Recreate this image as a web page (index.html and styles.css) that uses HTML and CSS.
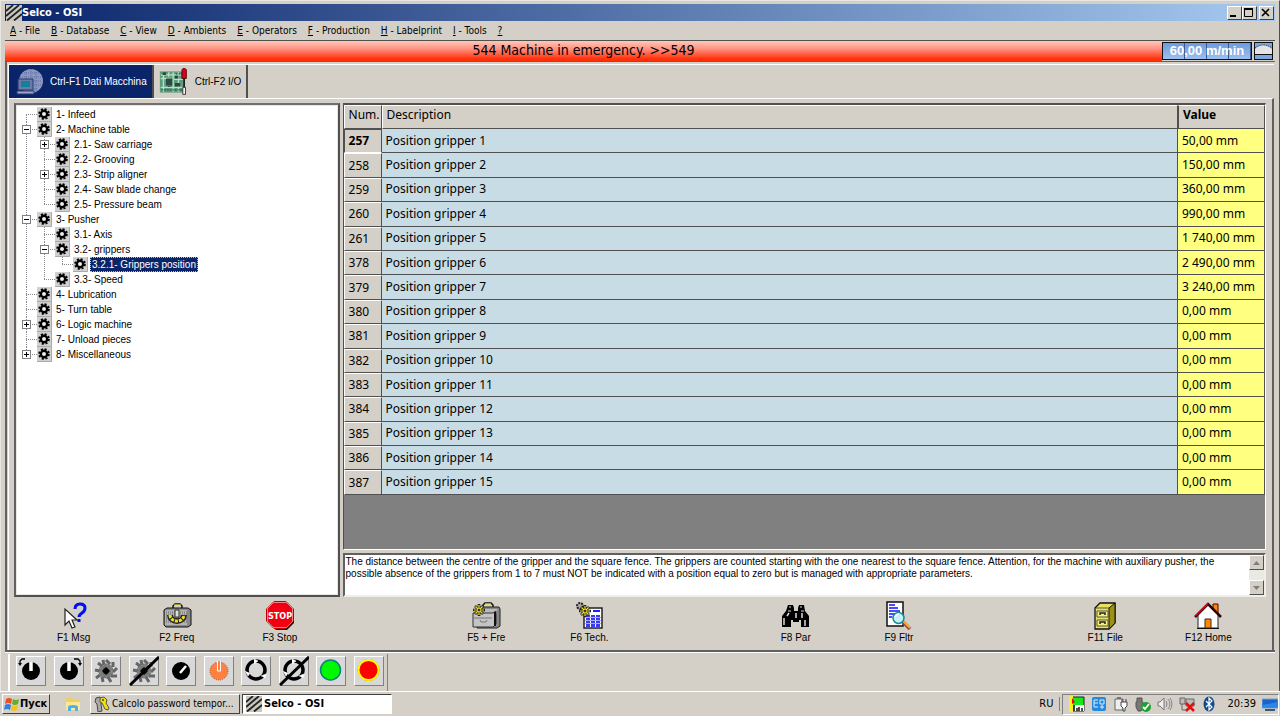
FILE: index.html
```html
<!DOCTYPE html>
<html lang="en">
<head>
    <meta charset="UTF-8">
    <meta name="viewport" content="width=device-width, initial-scale=1.0">
    <title>Selco - OSI</title>
    <link rel="stylesheet" href="styles.css">
</head>
<body>

    <!-- Shared icons -->
    <svg class="sprites" aria-hidden="true">
        <symbol id="logo" viewBox="0 0 16 16">
            <rect width="16" height="16" fill="#c8c8c0"/>
            <path d="M0 6L7 0M0 11L13 0M1 15.500L16 3M8 15.500L16 9" stroke="#222" stroke-width="1.800"/>
        </symbol>
        <symbol id="gear" viewBox="0 0 15 15">
            <rect width="15" height="15" fill="#d0d0d0"/>
            <path d="M0 14.500H14.500V0" fill="none" stroke="#aaa"/>
            <circle cx="7" cy="7" r="2" fill="#eee"/>
            <circle cx="7" cy="7" r="3.200" fill="none" stroke="#000" stroke-width="2.400"/>
            <circle cx="7" cy="7" r="4.900" fill="none" stroke="#000" stroke-width="1.800" stroke-dasharray="2.100 1.750"/>
        </symbol>
        <symbol id="saw" viewBox="0 0 30 30">
            <circle cx="15" cy="15" r="7.500" fill="#777"/>
            <path d="M15 4l4 4M22 6l0 5M26 12l-4 4M26 20l-6 0M20 26l-3-5M12 26l-1-5M5 22l4-3M4 14l5 1M7 7l4 3M12 4l1 5" stroke="#666" stroke-width="3"/>
            <circle cx="15" cy="15" r="6" fill="none" stroke="#999" stroke-width="1" stroke-dasharray="2 2"/>
            <circle cx="15" cy="15" r="3" fill="#000"/>
            <path d="M11 15h8M15 11v8" stroke="#000"/>
        </symbol>
        <symbol id="ring" viewBox="0 0 30 30">
            <circle cx="15" cy="14" r="9" fill="none" stroke="#000" stroke-width="3.500"/>
            <path d="M13 3l4 2-4 3M4 15l3 5 2-3M20 20l5-2-1 4" fill="#fff" stroke="#fff" stroke-width=".6"/>
        </symbol>
        <symbol id="spark" viewBox="0 0 12 12">
            <path d="M6 0v12M0 6h12M2 2l8 8M10 2l-8 8" stroke="#222" stroke-width="2.600"/>
            <path d="M6 1v10M1 6h10M2.500 2.500l7 7M9.500 2.500l-7 7" stroke="#f0e020" stroke-width="1.200"/>
            <circle cx="6" cy="6" r="1.300" fill="#333"/>
        </symbol>
    </svg>

    <main class="window">
        <header class="titlebar">
            <svg class="icon16"><use href="#logo"/></svg>
            <h1>Selco - OSI</h1>
            <button class="winbtn" aria-label="Minimize"><svg viewBox="0 0 11 10"><path d="M2 8h6" stroke="#000" stroke-width="2"/></svg></button>
            <button class="winbtn" aria-label="Maximize"><svg viewBox="0 0 11 10"><path d="M1.500 1v7.500h8V1M1 1.500h9" fill="none" stroke="#000"/><path d="M1 1h9" stroke="#000" stroke-width="2"/></svg></button>
            <button class="winbtn close" aria-label="Close"><svg viewBox="0 0 11 10"><path d="M2 1l7 7M9 1l-7 7" stroke="#000" stroke-width="1.600"/></svg></button>
        </header>

        <nav class="menu">
            <button><u>A</u> - File</button>
            <button><u>B</u> - Database</button>
            <button><u>C</u> - View</button>
            <button><u>D</u> - Ambients</button>
            <button><u>E</u> - Operators</button>
            <button><u>F</u> - Production</button>
            <button><u>H</u> - Labelprint</button>
            <button><u>I</u> - Tools</button>
            <button><u>?</u></button>
        </nav>

        <div class="alarm">
            <p class="alarm-text">544 Machine in emergency. &gt;&gt;549</p>
            <div class="speed">60,00 m/min</div>
            <svg class="gauge" viewBox="0 0 19 19"><rect x=".5" y=".5" width="18" height="17" fill="#7ba7e0" stroke="#111"/><path d="M1 12V7q8-8 17 0v5z" fill="#e4e4e4"/><path d="M1 6q8-6 17 0" fill="none" stroke="#223" stroke-dasharray="1 1"/><path d="M1 12.500h17" stroke="#111"/></svg>
        </div>

        <div class="client">
            <div class="tabs">
                <button class="tab active">
                    <svg viewBox="0 0 30 30"><circle cx="17" cy="14" r="12" fill="#8b98c0"/><path d="M8 6h18M6 10h22M6 14h22M8 18h20M10 22h14M12 3v23M17 2v24M22 3v22" stroke="#5d6da3" stroke-dasharray="1 1"/><path d="M4 12h15v11H4z" fill="#6b7ba8" stroke="#26396f"/><path d="M7 14h9v6H7z" fill="#168098"/><path d="M3 24h17v3H3z" fill="#9aa6c8" stroke="#26396f"/></svg>
                    Ctrl-F1 Dati Macchina
                </button>
                <button class="tab">
                    <svg viewBox="0 0 34 32"><path d="M1 4h28v24H1z" fill="#5c9c7c"/><path d="M2 8h26M2 12h12M17 13h10M2 22h25M5 5v22M11 5v5M16 5v22M22 5v22" stroke="#b7e2c4" stroke-width="1.500"/><path d="M8 12h7v8H8zM18 9h4v3h-4zM18 17h6v4h-6zM4 5h4v3H4z" fill="#2b4a40"/><path d="M3 25h24M10 21h4M19 7h8" stroke="#234" stroke-dasharray="2 1"/><path d="M26 2q2-3 5 0v10h-5z" fill="#e00010" stroke="#500"/><path d="M26 5v4" stroke="#70a"/><path d="M28.500 12v10" stroke="#222" stroke-width="2"/><path d="M27 22h3v8h-3z" fill="#fff" stroke="#222"/></svg>
                    Ctrl-F2 I/O
                </button>
            </div>

            <section class="panel">
                <div class="views">
                    <ul class="tree">
                        <li><div class="row"><span class="toggle"></span><svg><use href="#gear"/></svg><a href="#">1- Infeed</a></div></li>
                        <li>
                            <div class="row"><span class="toggle"><button aria-label="Collapse"></button></span><svg><use href="#gear"/></svg><a href="#">2- Machine table</a></div>
                            <ul>
                                <li><div class="row"><span class="toggle"><button class="plus" aria-label="Expand"></button></span><svg><use href="#gear"/></svg><a href="#">2.1- Saw carriage</a></div></li>
                                <li><div class="row"><span class="toggle"></span><svg><use href="#gear"/></svg><a href="#">2.2- Grooving</a></div></li>
                                <li><div class="row"><span class="toggle"><button class="plus" aria-label="Expand"></button></span><svg><use href="#gear"/></svg><a href="#">2.3- Strip aligner</a></div></li>
                                <li><div class="row"><span class="toggle"></span><svg><use href="#gear"/></svg><a href="#">2.4- Saw blade change</a></div></li>
                                <li><div class="row"><span class="toggle"></span><svg><use href="#gear"/></svg><a href="#">2.5- Pressure beam</a></div></li>
                            </ul>
                        </li>
                        <li>
                            <div class="row"><span class="toggle"><button aria-label="Collapse"></button></span><svg><use href="#gear"/></svg><a href="#">3- Pusher</a></div>
                            <ul>
                                <li><div class="row"><span class="toggle"></span><svg><use href="#gear"/></svg><a href="#">3.1- Axis</a></div></li>
                                <li>
                                    <div class="row"><span class="toggle"><button aria-label="Collapse"></button></span><svg><use href="#gear"/></svg><a href="#">3.2- grippers</a></div>
                                    <ul>
                                        <li><div class="row"><span class="toggle"></span><svg><use href="#gear"/></svg><a class="selected" href="#">3.2.1- Grippers position</a></div></li>
                                    </ul>
                                </li>
                                <li><div class="row"><span class="toggle"></span><svg><use href="#gear"/></svg><a href="#">3.3- Speed</a></div></li>
                            </ul>
                        </li>
                        <li><div class="row"><span class="toggle"></span><svg><use href="#gear"/></svg><a href="#">4- Lubrication</a></div></li>
                        <li><div class="row"><span class="toggle"></span><svg><use href="#gear"/></svg><a href="#">5- Turn table</a></div></li>
                        <li><div class="row"><span class="toggle"><button class="plus" aria-label="Expand"></button></span><svg><use href="#gear"/></svg><a href="#">6- Logic machine</a></div></li>
                        <li><div class="row"><span class="toggle"></span><svg><use href="#gear"/></svg><a href="#">7- Unload pieces</a></div></li>
                        <li><div class="row"><span class="toggle"><button class="plus" aria-label="Expand"></button></span><svg><use href="#gear"/></svg><a href="#">8- Miscellaneous</a></div></li>
                    </ul>

                    <div class="details">
                        <div class="grid-box">
                            <table class="params">
                                <thead>
                                    <tr><th class="num">Num.</th><th>Description</th><th class="value">Value</th></tr>
                                </thead>
                                <tbody>
                                    <tr class="current"><th>257</th><td>Position gripper 1</td><td>50,00 mm</td></tr>
                                    <tr><th>258</th><td>Position gripper 2</td><td>150,00 mm</td></tr>
                                    <tr><th>259</th><td>Position gripper 3</td><td>360,00 mm</td></tr>
                                    <tr><th>260</th><td>Position gripper 4</td><td>990,00 mm</td></tr>
                                    <tr><th>261</th><td>Position gripper 5</td><td>1 740,00 mm</td></tr>
                                    <tr><th>378</th><td>Position gripper 6</td><td>2 490,00 mm</td></tr>
                                    <tr><th>379</th><td>Position gripper 7</td><td>3 240,00 mm</td></tr>
                                    <tr><th>380</th><td>Position gripper 8</td><td>0,00 mm</td></tr>
                                    <tr><th>381</th><td>Position gripper 9</td><td>0,00 mm</td></tr>
                                    <tr><th>382</th><td>Position gripper 10</td><td>0,00 mm</td></tr>
                                    <tr><th>383</th><td>Position gripper 11</td><td>0,00 mm</td></tr>
                                    <tr><th>384</th><td>Position gripper 12</td><td>0,00 mm</td></tr>
                                    <tr><th>385</th><td>Position gripper 13</td><td>0,00 mm</td></tr>
                                    <tr><th>386</th><td>Position gripper 14</td><td>0,00 mm</td></tr>
                                    <tr><th>387</th><td>Position gripper 15</td><td>0,00 mm</td></tr>
                                </tbody>
                            </table>
                        </div>
                        <div class="help">
                            <textarea readonly aria-label="Parameter help">The distance between the centre of the gripper and the square fence. The grippers are counted starting with the one nearest to the square fence. Attention, for the machine with auxiliary pusher, the possible absence of the grippers from 1 to 7 must NOT be indicated with a position equal to zero but is managed with appropriate parameters.</textarea>
                            <div class="scroll">
                                <button aria-label="Scroll up"><svg viewBox="0 0 7 4"><path d="M0 4l3.500-4L7 4z" fill="#808080"/></svg></button>
                                <button aria-label="Scroll down"><svg viewBox="0 0 7 4"><path d="M0 0l3.500 4L7 0z" fill="#808080"/></svg></button>
                            </div>
                        </div>
                    </div>
                </div>

                <div class="fkeys">
                    <button>
                        <svg viewBox="0 0 30 30"><path d="M6 8v16l4-4 3 7 3-1-3-7h5z" fill="#fff" stroke="#222" stroke-width="1.200"/><path d="M16 8q0-5 5-5t5 4q0 3-3 5t-3 4M20 18v3" fill="none" stroke="#0010f0" stroke-width="3"/></svg>
                        F1 Msg
                    </button>
                    <button>
                        <svg viewBox="0 0 30 30"><path d="M11 8V5l2-2h5l2 2v3" fill="none" stroke="#111" stroke-width="1.500"/><path d="M12 4h7" stroke="#ee2"/><path d="M2 9l3-2h21l3 2v15l-3 2H4l-2-2z" fill="#888" stroke="#111"/><path d="M3 9h22v15H3z" fill="#b4b4b4"/><path d="M4 11h21M4 13h21M4 15h21M4 17h21M4 19h21M4 21h21" stroke="#666" stroke-dasharray="1 1"/><path d="M8 14a7 6 0 0 0 14 0" fill="none" stroke="#222" stroke-width="6"/><path d="M8 14a7 6 0 0 0 14 0" fill="none" stroke="#f0e020" stroke-width="3" stroke-dasharray="3 1"/><path d="M13 9h4v7h-4z" fill="#ddd" stroke="#333"/></svg>
                        F2 Freq
                    </button>
                    <button>
                        <svg viewBox="0 0 30 30"><path d="M10 3h12l7 7v12l-7 7H11l-7-7z" fill="#111"/><path d="M9 1h12l7 7v12l-7 7H9l-7-7V8z" fill="#f00010" stroke="#fff"/><path d="M9 .5h12l7.500 7.500v12l-7.500 7.500H9L1.500 20V8z" fill="none" stroke="#b00"/><text class="stop" x="15" y="18" text-anchor="middle">STOP</text></svg>
                        F3 Stop
                    </button>
                    <span></span>
                    <button>
                        <svg viewBox="0 0 30 30"><path d="M12 7V4l2-2h6l2 2v3" fill="none" stroke="#111" stroke-width="1.500"/><path d="M14 3h6" stroke="#ee2"/><path d="M6 8l2-2h20l1 2v17l-3 2H6z" fill="#888" stroke="#222"/><path d="M8 8h18v5H8z" fill="#bbb"/><path d="M2 12h20l3-2v13l-3 3H2z" fill="#c4c4c4" stroke="#333"/><path d="M3 17h18M9 19l1 2h5l1-2" fill="none" stroke="#777"/><path d="M24 11v14" stroke="#111" stroke-width="2"/><use href="#spark" x="2" y="3" width="12" height="12"/></svg>
                        F5 + Fre
                    </button>
                    <button>
                        <svg viewBox="0 0 30 30"><path d="M10 7h18v20H10z" fill="#fff" stroke="#222" stroke-width="1.500"/><path d="M19 10h7" stroke="#22f" stroke-width="2"/><path d="M12 14h4v12h-4zM17 14h4v12h-4zM22 14h4v12h-4z" fill="#3a3af0"/><path d="M11 16.500h16M11 19.500h16M11 22.500h16" stroke="#aaf"/><circle cx="6" cy="5" r="3" fill="#aaa" stroke="#222" stroke-width="2" stroke-dasharray="2 1"/><use href="#spark" x="5" y="4" width="12" height="12"/></svg>
                        F6 Tech.
                    </button>
                    <span></span>
                    <button>
                        <svg viewBox="0 0 30 30"><path d="M7 4h5l1 3v3h4V7l1-3h5l1 6 4 5v11h-8v-7h-2v2h-6v-2h-2v7H1V15l4-5z" fill="#000"/><path d="M8 6h2M19 6h2M7 10h3M20 10h3" stroke="#ddd"/><path d="M3 17v7M24 19v6M8 12l-2 3M21 12v5M15 12v5" stroke="#ddd" stroke-width="1.500"/></svg>
                        F8 Par
                    </button>
                    <button>
                        <svg viewBox="0 0 30 30"><path d="M3 1h16v24H3z" fill="#fff" stroke="#111" stroke-width="1.500"/><path d="M5 4h6M5 7h9M5 10h11M5 13h6M5 16h3" stroke="#11f" stroke-width="1.500"/><path d="M19 21l7 7" stroke="#a04040" stroke-width="3.500"/><path d="M19 20l7 7" stroke="#fa2" stroke-width="2"/><circle cx="14.500" cy="17" r="5.500" fill="#c4f0fa" stroke="#178a98" stroke-width="1.500"/><path d="M11 16q1-3 4-3" fill="none" stroke="#fff" stroke-width="1.500"/></svg>
                        F9 Fltr
                    </button>
                    <span></span>
                    <button>
                        <svg viewBox="0 0 30 30"><path d="M5 7l5-5h15v20l-6 6H5z" fill="#e8e060" stroke="#111" stroke-width="1.300"/><path d="M19 7l6-5v20l-6 6z" fill="#a09010" stroke="#111"/><path d="M6 7h13M7 10h11v6H7zM7 19h11v6H7z" fill="#f4f080" stroke="#554"/><path d="M10 14v-2h5v2M10 23v-2h5v2" fill="none" stroke="#222" stroke-width="1.500"/></svg>
                        F11 File
                    </button>
                    <button>
                        <svg viewBox="0 0 30 30"><path d="M20 3h5v9h-5z" fill="#f80" stroke="#500"/><path d="M5 14L15 4l10 10v13H5z" fill="#fff" stroke="#222"/><path d="M2 16L15 3l13 13" fill="none" stroke="#300" stroke-width="2.500"/><path d="M2.500 15L15 2.500" stroke="#e00020" stroke-width="1.500"/><path d="M12 18h6v9h-6z" fill="#f80" stroke="#422"/><path d="M4 27.500h22" stroke="#111"/></svg>
                        F12 Home
                    </button>
                </div>
            </section>
        </div>

        <div class="toolbar">
            <div class="tools">
                <button aria-label="Turn left"><svg viewBox="0 0 30 30"><circle cx="15" cy="15" r="9" fill="#000"/><path d="M15 6v9" stroke="#fff" stroke-width="3.500"/><path d="M4 8V5l2-2h3" fill="none" stroke="#000" stroke-width="1.300"/><path d="M2 7h4l-2 3z"/></svg></button>
                <button aria-label="Turn right"><svg viewBox="0 0 30 30"><circle cx="15" cy="15" r="9" fill="#000"/><path d="M15 6v9" stroke="#fff" stroke-width="3.500"/><path d="M26 8V5l-2-2h-4" fill="none" stroke="#000" stroke-width="1.300"/><path d="M24 7h4l-2 3z"/></svg></button>
                <button aria-label="Saw on"><svg viewBox="0 0 30 30"><use href="#saw"/></svg></button>
                <button aria-label="Saw off"><svg viewBox="0 0 30 30"><use href="#saw"/><path d="M1 29L30 1" stroke="#000" stroke-width="3"/></svg></button>
                <button aria-label="Selector"><svg viewBox="0 0 30 30"><circle cx="15" cy="15" r="9" fill="#000"/><path d="M14 17l6-7" stroke="#fff" stroke-width="2.500"/></svg></button>
                <button aria-label="Selector active"><svg viewBox="0 0 30 30"><circle cx="15" cy="15" r="9" fill="#ff8040" stroke="#b65018" stroke-dasharray="1 1"/><path d="M13.500 5v10h3V5" fill="#ff8040" stroke="#fff"/></svg></button>
                <button aria-label="Cycle on"><svg viewBox="0 0 30 30"><use href="#ring"/></svg></button>
                <button aria-label="Cycle off"><svg viewBox="0 0 30 30"><use href="#ring"/><path d="M1 29L30 1" stroke="#000" stroke-width="3"/></svg></button>
                <button aria-label="Start"><svg viewBox="0 0 30 30"><circle cx="14.500" cy="14" r="10" fill="#00f800" stroke="#088080" stroke-width="1.500"/></svg></button>
                <button aria-label="Stop"><svg viewBox="0 0 30 30"><circle cx="14.500" cy="14" r="10.500" fill="#f00" stroke="#777"/><circle cx="14.500" cy="14" r="10" fill="#f00" stroke="#ff0" stroke-width="1.800"/></svg></button>
            </div>
        </div>
    </main>

    <footer class="taskbar">
        <button class="start"><svg viewBox="0 0 16 16"><path d="M2 3q3-2 6 0L7 8Q4 6 1 8z" fill="#f05020"/><path d="M9 3q3 2 6 0l-1 5q-3 2-6 0z" fill="#60b030"/><path d="M1 9q3-2 6 0l-1 5q-3-2-6 0z" fill="#3080e0"/><path d="M8 9q3 2 6 0l-1 5q-3 2-6 0z" fill="#f8c020"/></svg>Пуск</button>
        <button class="quick" aria-label="Explorer"><svg viewBox="0 0 16 16"><path d="M1 3l2-2h4l1 2h7v11H1z" fill="#f2cf60"/><path d="M1 6h14v8H1z" fill="#fae99a"/><path d="M3 15v-4q0-2 5-2t5 2v4h-3v-3H6v3z" fill="#50b0e0"/></svg></button>
        <button class="task"><svg viewBox="0 0 16 16"><path d="M2 2l4-1 2 3-1 4 1 7-4 1-1-8-2-2z" fill="#aaa" stroke="#444"/><path d="M6 2l4-1 3 3-1 3 3 5-1 2-3-1-3-6-2-1z" fill="#f0e010" stroke="#554"/><circle cx="9" cy="4" r="1" fill="#443"/></svg>Calcolo password tempor...</button>
        <button class="task active"><svg><use href="#logo"/></svg>Selco - OSI</button>
        <span class="lang">RU</span>
        <div class="tray">
            <svg viewBox="0 0 16 16"><path d="M1 1h14v14H1z" fill="#18e818" stroke="#222"/><path d="M0 0h4v16H0z" fill="#f8f020"/><path d="M3 2l3 4-3 2z" fill="#e00"/><path d="M5 15V9h10v6z" fill="#fff"/><path d="M5 15V9M8 15v-3M10 15v-4M13 15v-3" stroke="#111" stroke-width="1.500"/></svg>
            <svg viewBox="0 0 16 16"><rect x="1" y="1" width="14" height="14" rx="2" fill="#2488e0"/><path d="M3 4h4M3 4v7h4M3 7h4M9 4h4v4H9zM9 11h4M11 9v4" fill="none" stroke="#d8efff"/></svg>
            <svg viewBox="0 0 16 16"><path d="M2 3h8v11H2z" fill="#eee" stroke="#666"/><path d="M4 1h4v2H4z" fill="#777"/><path d="M8 6h6v4l-2 2v3h-2v-3l-2-2zM9 3v3M13 3v3" fill="#fff" stroke="#444"/></svg>
            <svg viewBox="0 0 16 16"><path d="M2 2h5v4h1v5l-2 4H3l-2-4V6h1z" fill="#777" stroke="#555"/><circle cx="11" cy="11" r="5" fill="#20a030"/><path d="M8 11l2 2 4-5" fill="none" stroke="#fff" stroke-width="1.800"/></svg>
            <svg viewBox="0 0 16 16"><path d="M1 6h2l4-4v12l-4-4H1z" fill="#eee" stroke="#777"/><path d="M9 5q2 3 0 6M11 3q4 5 0 10M13 2q4 6 0 12" fill="none" stroke="#888"/></svg>
            <svg viewBox="0 0 16 16"><path d="M1 2h5v6H1zM7 3h8v7H7z" fill="#bbb" stroke="#666"/><path d="M3 8v6h4M10 10v4" fill="none" stroke="#666"/><path d="M7 7l8 8M15 7l-8 8" stroke="#e01010" stroke-width="2.500"/></svg>
            <svg viewBox="0 0 16 16"><ellipse cx="8" cy="8" rx="5.500" ry="7.500" fill="#104a90"/><path d="M5 5l6 6-3 3V2l3 3-6 6" fill="none" stroke="#fff" stroke-width="1.200"/></svg>
            <time>20:39</time>
            <svg viewBox="0 0 16 16"><path d="M0 3h16v9H0z" fill="#1a64c8" stroke="#7aa0d0"/><path d="M0 9l16-3v5H0z" fill="#2c86e8"/><path d="M3 13h10v2H3z" fill="#456"/></svg>
        </div>
    </footer>
</body>
</html>
```
FILE: styles.css
```css
* {
    box-sizing: border-box;
}

body {
    margin: 0;
    height: 100vh;
    display: flex;
    flex-direction: column;
    background: #d4d0c8;
    color: #000;
    font-family: "Liberation Sans", "MS Sans Serif", Arial, sans-serif;
    font-size: 10px;
    line-height: 14px;
    overflow: hidden;
}

button {
    margin: 0;
    padding: 0;
    border: none;
    background: none;
    color: inherit;
    font: inherit;
}

svg {
    display: block;
    flex: none;
}

.sprites {
    position: absolute;
    width: 0;
    height: 0;
}

.window {
    flex: 1;
    min-height: 0;
    display: flex;
    flex-direction: column;
    padding: 3px 4px 0;
    border-top: 1px solid #e8e6e0;
    border-right: 1px solid #505050;
    border-left: 1px solid #e8e6e0;
}

/* Title bar */
.titlebar {
    display: flex;
    align-items: center;
    height: 17px;
    padding: 0 1px;
    background: linear-gradient(to right, #0a246a, #a6caf0);
}

.icon16 {
    width: 16px;
    height: 16px;
}

.titlebar h1 {
    flex: 1;
    margin: 0;
    color: #fff;
    font-family: "DejaVu Sans Condensed", Tahoma, sans-serif;
    font-size: 11px;
    font-weight: bold;
}

.winbtn {
    width: 15px;
    height: 14px;
    background: #d4d0c8;
    border: 1px solid;
    border-color: #fff #404040 #404040 #fff;
}

.winbtn svg {
    width: 11px;
    height: 10px;
}

.close {
    margin-left: 2px;
}

/* Menu */
.menu {
    display: flex;
    gap: 11px;
    height: 19px;
    padding-left: 5px;
    font-family: "DejaVu Sans Condensed", Tahoma, sans-serif;
    font-size: 10px;
}

/* Alarm bar */
.alarm {
    display: flex;
    align-items: center;
    height: 22px;
    border-top: 1px solid #505050;
    border-bottom: 1px solid #606060;
}

.alarm-text {
    flex: 1;
    margin: 0;
    height: 20px;
    line-height: 18px;
    text-align: center;
    font-family: "DejaVu Sans Condensed", Tahoma, sans-serif;
    font-size: 14px;
    background: linear-gradient(#ffc8b8, #ff9080 40%, #ff3008 90%);
}

.speed {
    width: 90px;
    height: 18px;
    margin-right: 2px;
    border: 1px solid #111;
    background: repeating-linear-gradient(to right, transparent 0 21px, #3a5a90 21px 22px), linear-gradient(#6d9bdc, #9cc0f0);
    color: #fff;
    text-align: center;
    font-size: 13px;
    font-weight: bold;
    line-height: 16px;
}

.gauge {
    width: 19px;
    height: 19px;
    margin-right: 2px;
}

/* Tabs and main panel */
.client {
    flex: 1;
    min-height: 0;
    display: flex;
    flex-direction: column;
    padding: 2px 1px 0;
    border-left: 2px solid #606060;
    border-bottom: 2px solid #606060;
}

.tabs {
    display: flex;
    height: 34px;
    border-left: 1px solid #fff;
    border-top: 1px solid #fff;
}

.tab {
    display: flex;
    align-items: center;
    gap: 6px;
    padding: 0 5px;
    border-right: 2px solid #505050;
}

.tab svg {
    width: 30px;
    height: 30px;
}

.tab.active {
    background: #0a246a;
    color: #fff;
}

.panel {
    flex: 1;
    min-height: 0;
    display: flex;
    flex-direction: column;
    padding: 4px 6px 0 5px;
    border-top: 1px solid #fff;
    border-left: 1px solid #fff;
    border-right: 2px solid #606060;
}

.views {
    flex: 1;
    min-height: 0;
    display: flex;
    gap: 3px;
}

/* Tree */
.tree {
    flex: none;
    width: 26%;
    margin: 0;
    padding: 2px 0 0 2px;
    list-style: none;
    background: #fff;
    border: 2px solid;
    border-color: #707070 #505050 #505050 #606060;
    outline: 1px solid #e8e6e0;
    outline-offset: -3px;
}

.tree ul {
    margin: 0;
    padding: 0 0 0 18px;
    list-style: none;
}

.tree li {
    background: repeating-linear-gradient(#888 0 1px, #fff 1px 2px) 8px 0 / 1px 100% no-repeat;
}

.tree > li:first-child {
    background-position: 8px 8px;
}

.tree li:last-child {
    background-size: 1px 8px;
}

.row {
    display: flex;
    align-items: center;
    height: 15px;
    background: repeating-linear-gradient(to right, #888 0 1px, #fff 1px 2px) 8px 7px / 11px 1px no-repeat;
}

.row svg {
    width: 15px;
    height: 15px;
}

.row a {
    margin-left: 2px;
    padding: 0 1px;
    color: #000;
    line-height: 13px;
    text-decoration: none;
    border: 1px solid transparent;
}

.row a.selected {
    background: #0a246a;
    color: #fff;
    border: 1px dotted #d8c060;
}

.toggle {
    width: 19px;
    padding-left: 4px;
}

.toggle button {
    display: block;
    width: 9px;
    height: 9px;
    border: 1px solid #808080;
    background: linear-gradient(#000, #000) center / 5px 1px no-repeat, #fff;
}

.toggle .plus {
    background: linear-gradient(#000, #000) center / 5px 1px no-repeat, linear-gradient(#000, #000) center / 1px 5px no-repeat, #fff;
}

/* Parameter table */
.details {
    flex: 1;
    min-width: 0;
    display: flex;
    flex-direction: column;
    gap: 3px;
}

.grid-box {
    flex: 1;
    min-height: 0;
    background: #808080;
    border: 1px solid;
    border-color: #505050 #fff #fff #505050;
    border-top-width: 2px;
}

.params {
    width: 100%;
    height: 390px;
    border-collapse: separate;
    border-spacing: 0;
    font-family: "Noto Sans", "Trebuchet MS", sans-serif;
    font-size: 12px;
    line-height: 16px;
}

.params th {
    padding: 0 4px;
    text-align: left;
    font-weight: normal;
    background: #d4d0c8;
    border: 1px solid;
    border-color: #fff #505050 #505050 #fff;
}

.params thead th {
    height: 24px;
    padding-bottom: 4px;
}

.params .num {
    width: 38px;
    padding-right: 0;
}

.params .value {
    width: 87px;
    font-weight: bold;
    border-left-color: #505050;
}

.params td {
    padding: 0 4px;
    background: #c8dce6;
    border-right: 1px solid #505050;
    border-bottom: 1px solid #505050;
    white-space: nowrap;
}

.params td:last-child {
    background: #ffff80;
}

.params .current th {
    font-weight: bold;
    border-color: #505050 #505050 #fff #505050;
}

/* Help text */
.help {
    display: flex;
    height: 44px;
    border: 2px solid;
    border-color: #606060 #f0eee8 #f0eee8 #606060;
    background: #fff;
}

.help textarea {
    flex: 1;
    padding: 1px 0 0 1px;
    border: none;
    outline: none;
    resize: none;
    overflow: hidden;
    background: #fff;
    color: #000;
    font: inherit;
    line-height: 12px;
}

.scroll {
    display: flex;
    flex-direction: column;
    justify-content: space-between;
    width: 15px;
    background: #ebe9e4;
}

.scroll button {
    display: flex;
    align-items: center;
    justify-content: center;
    width: 15px;
    height: 15px;
    background: #d4d0c8;
    border: 1px solid;
    border-color: #fff #505050 #505050 #fff;
}

.scroll svg {
    width: 7px;
    height: 4px;
}

/* Function keys */
.fkeys {
    display: grid;
    grid-template-columns: repeat(12, 1fr);
    height: 53px;
    padding: 4px 6px 0 8px;
}

.fkeys button {
    display: flex;
    flex-direction: column;
    align-items: center;
}

.fkeys svg {
    width: 30px;
    height: 30px;
}

.stop {
    fill: #fff;
    font-family: "DejaVu Sans Condensed", Tahoma, sans-serif;
    font-size: 9px;
    font-weight: bold;
}

/* Machine toolbar */
.toolbar {
    display: flex;
    height: 39px;
    padding: 1px 0 0 3px;
    border-top: 1px solid #fff;
}

.tools {
    display: flex;
    justify-content: space-between;
    width: 380px;
    padding: 2px 3px 4px 6px;
    border-left: 2px solid #fff;
    border-right: 1px solid #808080;
}

.tools button {
    width: 30px;
    height: 30px;
    background: #d8d8d8;
    border: 1px solid;
    border-color: #fff #808080 #808080 #fff;
}

.tools svg {
    width: 30px;
    height: 30px;
    margin: -1px;
}

/* Taskbar */
.taskbar {
    display: flex;
    align-items: center;
    height: 25px;
    padding: 0 1px 0 2px;
    border-top: 1px solid #fff;
    font-family: "DejaVu Sans Condensed", Tahoma, sans-serif;
    font-size: 11px;
}

.taskbar svg {
    width: 16px;
    height: 16px;
}

.start,
.task {
    display: flex;
    align-items: center;
    height: 20px;
    border: 1px solid;
    border-color: #fff #404040 #404040 #fff;
}

.start {
    width: 48px;
    padding-left: 1px;
    font-weight: bold;
}

.quick {
    margin: 0 9px 0 15px;
}

.task {
    gap: 2px;
    width: 150px;
    margin-right: 2px;
    padding-left: 3px;
    white-space: nowrap;
    font-size: 10px;
}

.task.active {
    background: #fff;
    font-size: 11px;
    font-weight: bold;
    border-color: #404040 #fff #fff #404040;
}

.lang {
    margin-left: auto;
    padding-right: 6px;
    border-right: 1px solid #808080;
}

.tray {
    display: flex;
    align-items: center;
    gap: 6px;
    height: 21px;
    margin-left: 2px;
    padding-left: 6px;
    border: 1px solid;
    border-color: #808080 #fff #fff #808080;
}

.tray time {
    margin: 0 0 0 4px;
}
```
